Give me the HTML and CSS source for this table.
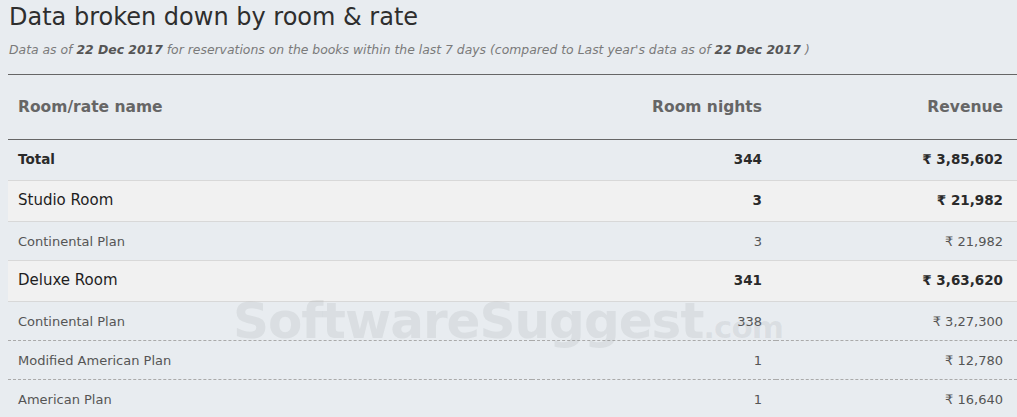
FILE: index.html
```html
<!DOCTYPE html>
<html>
<head>
<meta charset="utf-8">
<link rel="stylesheet" href="styles.css">
</head>
<body>
<div class="page">
  <h1 class="title">Data broken down by room &amp; rate</h1>
  <p class="sub">Data as of <b>22 Dec 2017</b> for reservations on the books within the last 7 days (compared to Last year's data as of <b>22 Dec 2017</b> )</p>
  <table class="grid">
    <thead>
      <tr class="head">
        <th class="name">Room/rate name</th>
        <th class="num">Room nights</th>
        <th class="rev">Revenue</th>
      </tr>
    </thead>
    <tbody>
      <tr class="total">
        <td class="name">Total</td><td class="num">344</td><td class="rev">₹ 3,85,602</td>
      </tr>
      <tr class="room">
        <td class="name">Studio Room</td><td class="num">3</td><td class="rev">₹ 21,982</td>
      </tr>
      <tr class="plan last">
        <td class="name">Continental Plan</td><td class="num">3</td><td class="rev">₹ 21,982</td>
      </tr>
      <tr class="room">
        <td class="name">Deluxe Room</td><td class="num">341</td><td class="rev">₹ 3,63,620</td>
      </tr>
      <tr class="plan">
        <td class="name">Continental Plan</td><td class="num">338</td><td class="rev">₹ 3,27,300</td>
      </tr>
      <tr class="plan">
        <td class="name">Modified American Plan</td><td class="num">1</td><td class="rev">₹ 12,780</td>
      </tr>
      <tr class="plan last">
        <td class="name">American Plan</td><td class="num">1</td><td class="rev">₹ 16,640</td>
      </tr>
    </tbody>
  </table>
  <div class="watermark">SoftwareSuggest<span class="dot">.com</span></div>
</div>
</body>
</html>
```
FILE: styles.css
```css
html, body {
  margin: 0;
  padding: 0;
  background: #e8ecf0;
}
body {
  font-family: "DejaVu Sans", "Open Sans", sans-serif;
  overflow: hidden;
}
.page {
  position: relative;
  padding: 0 0 0 8px;
}
.title {
  margin: 0;
  padding: 3px 0 0 1px;
  font-size: 24px;
  font-weight: normal;
  color: #2e2e2e;
  line-height: 28px;
}
.sub {
  margin: 0;
  padding: 11px 0 0 1px;
  font-size: 12.4px;
  font-style: italic;
  color: #7a7a7a;
  line-height: 16px;
  height: 43px;
  box-sizing: border-box;
}
.sub b {
  color: #555;
}
.grid {
  width: 1009px;
  border-collapse: collapse;
  border-top: 1px solid #666;
}
.grid th, .grid td {
  padding: 0 14px 0 10px;
}
.name { text-align: left; }
.num { text-align: right; width: 220px; }
.rev { text-align: right; width: 217px; }
.head th {
  height: 64px;
  font-size: 15.5px;
  font-weight: bold;
  color: #666;
  border-bottom: 1px solid #666;
}
.grid .total td {
  height: 37px;
  padding-bottom: 3px;
  font-size: 13.5px;
  font-weight: 600;
  color: #2a2a2a;
  border-bottom: 1px solid #d8d8d8;
}
.grid .room td {
  height: 38px;
  padding-bottom: 2px;
  background: #f1f1f1;
  font-size: 15px;
  color: #1e1e1e;
  border-bottom: 1px solid #d8d8d8;
}
.grid .room td.num, .grid .room td.rev {
  font-weight: 600;
  font-size: 13.5px;
  color: #2a2a2a;
}
.plan td {
  height: 38px;
  font-size: 13px;
  color: #555;
  border-bottom: 1px dashed #aaa;
}
.plan.last td {
  border-bottom: 1px solid #d8d8d8;
}
.watermark {
  position: absolute;
  left: 233px;
  top: 292px;
  font-family: "DejaVu Sans", sans-serif;
  font-weight: bold;
  font-size: 50px;
  letter-spacing: -1px;
  color: rgba(120, 128, 135, 0.13);
  pointer-events: none;
}
.watermark .dot {
  font-size: 31px;
}
```
